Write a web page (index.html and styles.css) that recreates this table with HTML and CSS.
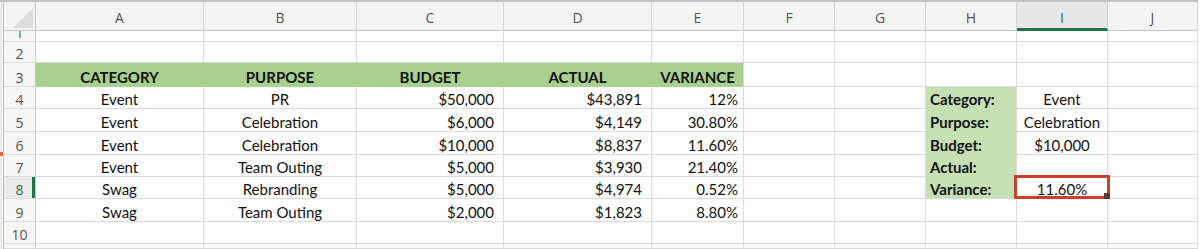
FILE: index.html
```html
<!DOCTYPE html>
<html>
<head>
<meta charset="utf-8">
<link rel="stylesheet" href="styles.css">
</head>
<body>
<div class="sheet">
  <div class="strip"></div>

  <div class="ch corner"><svg width="31" height="28" viewBox="0 0 31 28"><polygon points="9,26 29,26 29,6" fill="#dcdcdc"/></svg></div>
  <div class="ch">A</div><div class="ch">B</div><div class="ch">C</div><div class="ch">D</div><div class="ch">E</div>
  <div class="ch">F</div><div class="ch">G</div><div class="ch">H</div><div class="ch sel">I</div><div class="ch">J</div>

  <div class="rh">1</div>
  <div class="c"></div><div class="c"></div><div class="c"></div><div class="c"></div><div class="c"></div>
  <div class="c"></div><div class="c"></div><div class="c"></div><div class="c"></div><div class="c"></div>

  <div class="rh">2</div>
  <div class="c"></div><div class="c"></div><div class="c"></div><div class="c"></div><div class="c"></div>
  <div class="c"></div><div class="c"></div><div class="c"></div><div class="c"></div><div class="c"></div>

  <div class="rh">3</div>
  <div class="c hd">CATEGORY</div><div class="c hd">PURPOSE</div><div class="c hd">BUDGET</div><div class="c hd">ACTUAL</div><div class="c hd last">VARIANCE</div>
  <div class="c"></div><div class="c"></div><div class="c"></div><div class="c"></div><div class="c"></div>

  <div class="rh">4</div>
  <div class="c">Event</div><div class="c">PR</div><div class="c r">$50,000</div><div class="c r">$43,891</div><div class="c r e">12%</div>
  <div class="c"></div><div class="c"></div><div class="c lab">Category:</div><div class="c">Event</div><div class="c"></div>

  <div class="rh">5</div>
  <div class="c">Event</div><div class="c">Celebration</div><div class="c r">$6,000</div><div class="c r">$4,149</div><div class="c r e">30.80%</div>
  <div class="c"></div><div class="c"></div><div class="c lab">Purpose:</div><div class="c">Celebration</div><div class="c"></div>

  <div class="rh">6</div>
  <div class="c">Event</div><div class="c">Celebration</div><div class="c r">$10,000</div><div class="c r">$8,837</div><div class="c r e">11.60%</div>
  <div class="c"></div><div class="c"></div><div class="c lab">Budget:</div><div class="c">$10,000</div><div class="c"></div>

  <div class="rh">7</div>
  <div class="c">Event</div><div class="c">Team Outing</div><div class="c r">$5,000</div><div class="c r">$3,930</div><div class="c r e">21.40%</div>
  <div class="c"></div><div class="c"></div><div class="c lab">Actual:</div><div class="c"></div><div class="c"></div>

  <div class="rh sel">8</div>
  <div class="c">Swag</div><div class="c">Rebranding</div><div class="c r">$5,000</div><div class="c r">$4,974</div><div class="c r e">0.52%</div>
  <div class="c"></div><div class="c"></div><div class="c lab end">Variance:</div><div class="c pick">11.60%<span class="pick-box"><span class="handle"></span></span></div><div class="c"></div>

  <div class="rh">9</div>
  <div class="c">Swag</div><div class="c">Team Outing</div><div class="c r">$2,000</div><div class="c r">$1,823</div><div class="c r e">8.80%</div>
  <div class="c"></div><div class="c"></div><div class="c"></div><div class="c"></div><div class="c"></div>

  <div class="rh">10</div>
  <div class="c"></div><div class="c"></div><div class="c"></div><div class="c"></div><div class="c"></div>
  <div class="c"></div><div class="c"></div><div class="c"></div><div class="c"></div><div class="c"></div>

  <div class="rh"></div>
  <div class="c"></div><div class="c"></div><div class="c"></div><div class="c"></div><div class="c"></div>
  <div class="c"></div><div class="c"></div><div class="c"></div><div class="c"></div><div class="c"></div>
</div>
</body>
</html>
```
FILE: styles.css
```css
html, body {
  margin: 0;
  padding: 0;
  background: #ffffff;
  width: 1200px;
  height: 249px;
  overflow: hidden;
}

body {
  font-family: Lato, "Open Sans", "Liberation Sans", sans-serif;
}

.sheet {
  display: grid;
  width: 1198px;
  grid-template-columns: 4px 32px 168px 153px 147px 148px 92px 91px 91px 91px 91px 90px;
  grid-template-rows: 29px 11px 21px 24px 22px 23px 23px 22px 22px 23px 22px 5px;
  border-top: 2px solid #c3c3c3;
}

.strip {
  grid-column: 1;
  grid-row: 1 / -1;
  box-sizing: border-box;
  border-right: 1px solid #c4c4c4;
  background: linear-gradient(to bottom, #ededed 0 150px, #e2643d 150px 154px, #ededed 154px);
}

.ch {
  box-sizing: border-box;
  display: flex;
  align-items: center;
  justify-content: center;
  padding-top: 3px;
  background: #f4f4f4;
  border-right: 1px solid #d6d6d6;
  border-bottom: 1px solid #c8c8c8;
  font-family: "Open Sans", "Liberation Sans", sans-serif;
  font-size: 14px;
  line-height: 14px;
  color: #555555;
}

.ch.corner {
  padding: 0;
  align-items: stretch;
  justify-content: stretch;
  border-right-color: #c8c8c8;
}

.ch.sel {
  background: #e6e6e6;
  border-bottom: 3px solid #217346;
  color: #217346;
  padding-top: 5px;
}

.rh {
  box-sizing: border-box;
  display: flex;
  align-items: flex-end;
  justify-content: center;
  padding-bottom: 1px;
  overflow: hidden;
  background: #f6f6f6;
  border-right: 1px solid #c8c8c8;
  border-bottom: 1px solid #dcdcdc;
  font-family: "Open Sans", "Liberation Sans", sans-serif;
  font-size: 14px;
  line-height: 14px;
  color: #555555;
}

.rh.sel {
  color: #217346;
  background: #eaeaea;
  box-shadow: inset -3px 0 0 #217346;
}

.c {
  box-sizing: border-box;
  display: flex;
  align-items: flex-end;
  justify-content: center;
  border-right: 1px solid #dadada;
  border-bottom: 1px solid #dadada;
  font-size: 15px;
  line-height: 18px;
  color: #111111;
  white-space: nowrap;
}

.c.r {
  justify-content: flex-end;
  padding-right: 9px;
}

.c.r.e {
  padding-right: 5px;
}

.c.hd {
  background: #a9d08e;
  border-color: #a9d08e;
  font-weight: 700;
}

.c.hd.last {
  border-right-color: #dadada;
}

.c.lab {
  justify-content: flex-start;
  padding-left: 4px;
  background: #c6e0b4;
  border-bottom-color: #c6e0b4;
  font-weight: 700;
}

.c.lab.end {
  border-bottom-color: #dadada;
}

.c.pick {
  position: relative;
}

.pick-box {
  position: absolute;
  left: -3px;
  right: -3px;
  top: -2px;
  bottom: -1px;
  border: 3px solid #c9402b;
}

.handle {
  position: absolute;
  right: -3px;
  bottom: -3px;
  width: 6px;
  height: 6px;
  background: #5a3b2c;
}
```
